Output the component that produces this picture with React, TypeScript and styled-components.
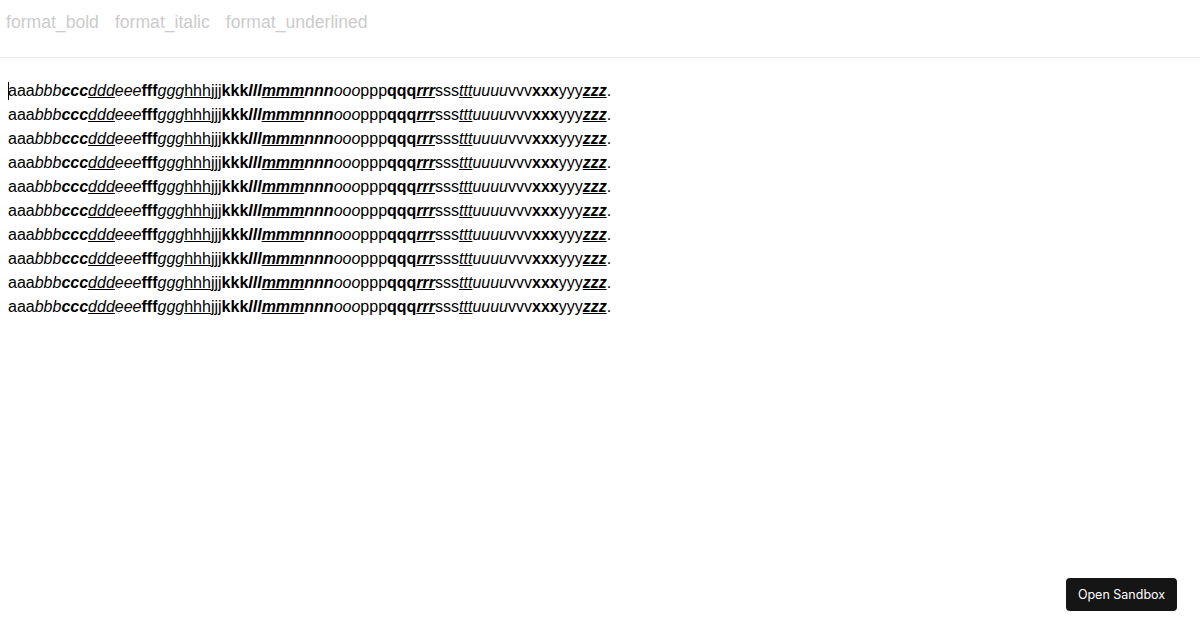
import styled, { createGlobalStyle } from "styled-components";

const GlobalStyle = createGlobalStyle`
  html, body {
    margin: 0;
    padding: 0;
    background: #fff;
  }
  body {
    font-family: "Liberation Sans", Arial, sans-serif;
    color: #000;
  }
`;

const Toolbar = styled("div")`
  display: flex;
  align-items: flex-start;
  gap: 16px;
  height: 58px;
  padding: 12px 6px 0;
  box-sizing: border-box;
  border-bottom: 1px solid #eaeaea;
`;

const ToolButton = styled("span")`
  font-family: "Liberation Sans", Arial, sans-serif;
  font-size: 17.6px;
  line-height: 21px;
  color: #cccccc;
  cursor: pointer;
`;

const Editor = styled("div")`
  padding: 21px 8px 0;
  font-family: "Liberation Sans", Arial, sans-serif;
  font-size: 16px;
  line-height: 24px;
`;

const Line = styled("div")`
  position: relative;
  white-space: nowrap;
`;

const Caret = styled("span")`
  position: absolute;
  left: 0;
  top: 3px;
  width: 1px;
  height: 18px;
  background: #000;
`;

const Mark = styled("span")<{ $b?: boolean; $i?: boolean; $u?: boolean }>`
  font-weight: ${(p) => (p.$b ? 700 : 400)};
  font-style: ${(p) => (p.$i ? "italic" : "normal")};
  text-decoration: ${(p) => (p.$u ? "underline" : "none")};
`;

const SandboxButton = styled("button")`
  position: fixed;
  right: 23px;
  bottom: 19px;
  width: 111px;
  height: 33px;
  border: none;
  border-radius: 4px;
  background: #151515;
  color: #fff;
  font-family: Inter, "Liberation Sans", sans-serif;
  font-size: 12.5px;
  cursor: pointer;
`;

type Seg = [string, string];

const segments: Seg[] = [
  ["aaa", ""],
  ["bbb", "i"],
  ["ccc", "bi"],
  ["ddd", "iu"],
  ["eee", "i"],
  ["fff", "b"],
  ["ggg", "iu"],
  ["hhh", "u"],
  ["jjj", ""],
  ["kkk", "b"],
  ["lll", "bi"],
  ["mmm", "biu"],
  ["nnn", "bi"],
  ["ooo", "i"],
  ["ppp", ""],
  ["qqq", "b"],
  ["rrr", "biu"],
  ["sss", ""],
  ["ttt", "iu"],
  ["uuuu", "i"],
  ["vvv", ""],
  ["xxx", "b"],
  ["yyy", ""],
  ["zzz", "biu"],
  [".", ""],
];

const App = () => {
  const lines = Array.from({ length: 10 }, (_, i) => i);

  return (
    <>
      <GlobalStyle />
      <Toolbar>
        <ToolButton>format_bold</ToolButton>
        <ToolButton>format_italic</ToolButton>
        <ToolButton>format_underlined</ToolButton>
      </Toolbar>
      <Editor>
        {lines.map((n) => (
          <Line key={n}>
            {n === 0 && <Caret />}
            {segments.map(([text, f], k) => (
              <Mark
                key={k}
                $b={f.includes("b")}
                $i={f.includes("i")}
                $u={f.includes("u")}
              >
                {text}
              </Mark>
            ))}
          </Line>
        ))}
      </Editor>
      <SandboxButton>Open Sandbox</SandboxButton>
    </>
  );
};

export default App;
